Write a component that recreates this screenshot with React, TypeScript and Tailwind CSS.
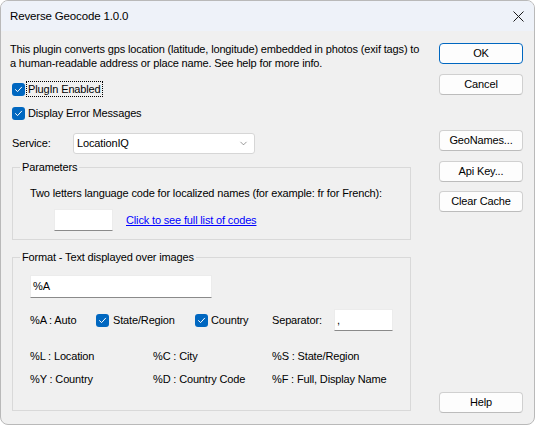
import { ChevronDown } from 'lucide-react'

// ============================================================================
// Small Win32-style controls
// ============================================================================

function CheckBox() {
  return (
    <span className="flex h-[13px] w-[13px] shrink-0 items-center justify-center rounded-[3px] bg-[#0067c0]">
      <svg width="9" height="9" viewBox="0 0 9 9" fill="none">
        <path d="M1.5 4.6 L3.6 6.6 L7.6 2.2" stroke="#ffffff" strokeWidth="1" strokeLinecap="round" strokeLinejoin="round" />
      </svg>
    </span>
  )
}

interface DlgButtonProps {
  label: string
  isDefault?: boolean
  className?: string
}

function DlgButton({ label, isDefault, className }: DlgButtonProps) {
  return (
    <button
      className={
        'flex h-[21px] w-[84px] items-center justify-center rounded-[4px] border bg-[#fdfdfd] text-[11px] text-black ' +
        (isDefault ? 'border-[#0067c0] ' : 'border-[#d0d0d0] border-b-[#bcbcbc] ') +
        (className ?? '')
      }
    >
      {label}
    </button>
  )
}

function TextBox({ value, className }: { value?: string; className?: string }) {
  return (
    <div
      className={
        'flex items-center border border-[#ececec] border-b-[#8a8a8a] bg-white pl-[2px] text-[11px] text-black ' +
        (className ?? '')
      }
    >
      {value}
    </div>
  )
}

// ============================================================================
// App - Reverse Geocode plugin settings dialog
// ============================================================================

export default function App() {
  return (
    <div
      className="h-[425px] w-[535px] bg-white tracking-[-0.15px] text-black"
      style={{ fontFamily: '"Liberation Sans", Arial, sans-serif' }}
    >
      <div className="flex h-full w-full flex-col overflow-hidden rounded-[8px] border border-[#b9b9b9] bg-[#f0f0f0]">
        {/* Title bar */}
        <div className="flex h-[30px] shrink-0 items-center justify-between bg-[#eef2f9] pl-[9px] pr-[10px]">
          <span className="text-[11.5px] leading-[14px]">Reverse Geocode 1.0.0</span>
          <svg width="11" height="11" viewBox="0 0 11 11" fill="none">
            <path d="M0.5 0.5 L10.5 10.5 M10.5 0.5 L0.5 10.5" stroke="#1a1a1a" strokeWidth="1" />
          </svg>
        </div>

        <div className="flex flex-1">
          {/* Left column */}
          <div className="flex flex-1 flex-col pl-[9px]">
            <p className="mt-[11px] text-[11px] leading-[14px]">
              This plugin converts gps location (latitude, longitude) embedded in photos (exif tags) to
              <br />a human-readable address or place name. See help for more info.
            </p>

            <div className="ml-[2px] mt-[11px] flex h-[16px] items-center gap-[2px]">
              <CheckBox />
              <span className="px-[1px] text-[11px] leading-[14px] outline-1 outline-dotted outline-black">
                PlugIn Enabled
              </span>
            </div>

            <div className="ml-[2px] mt-[8px] flex h-[16px] items-center gap-[3px]">
              <CheckBox />
              <span className="text-[11px] leading-[14px]">Display Error Messages</span>
            </div>

            <div className="ml-[2px] mt-[12px] flex items-center">
              <span className="w-[61px] text-[11px]">Service:</span>
              <div className="flex h-[21px] w-[182px] items-center justify-between rounded-[3px] border border-[#d6d6d6] bg-white pl-[3px] pr-[5px] text-[11px]">
                LocationIQ
                <ChevronDown className="h-[11px] w-[11px] text-[#5f5f5f]" strokeWidth={1.4} />
              </div>
            </div>

            <fieldset className="ml-[2px] mt-[6px] w-[399px] border border-[#d9d9d9]">
              <legend className="ml-[7px] px-[2px] text-[11px] leading-[14px]">Parameters</legend>
              <div className="px-[17px] pb-[8px]">
                <p className="mt-[12px] text-[11px] leading-[14px]">
                  Two letters language code for localized names (for example: fr for French):
                </p>
                <div className="mt-[9px] flex items-center">
                  <TextBox className="ml-[24px] h-[22px] w-[59px]" />
                  <a className="ml-[13px] cursor-pointer text-[11px] text-[#0000ff] underline">
                    Click to see full list of codes
                  </a>
                </div>
              </div>
            </fieldset>

            <fieldset className="ml-[2px] mt-[10px] w-[399px] border border-[#d9d9d9]">
              <legend className="ml-[7px] px-[2px] text-[11px] leading-[14px]">
                Format - Text displayed over images
              </legend>
              <div className="px-[17px] pb-[24px]">
                <TextBox value="%A" className="mt-[11px] h-[23px] w-[182px]" />

                <div className="mt-[11px] flex h-[22px] items-center text-[11px]">
                  <span className="w-[66px]">%A : Auto</span>
                  <CheckBox />
                  <span className="ml-[4px] w-[82px]">State/Region</span>
                  <CheckBox />
                  <span className="ml-[3px] w-[61px]">Country</span>
                  <span className="w-[62px]">Separator:</span>
                  <TextBox value="," className="h-[22px] w-[59px]" />
                </div>

                <div className="mt-[18px] grid grid-cols-[123px_119px_1fr] gap-y-[9px] text-[11px] leading-[14px]">
                  <span>%L : Location</span>
                  <span>%C : City</span>
                  <span>%S : State/Region</span>
                  <span>%Y : Country</span>
                  <span>%D : Country Code</span>
                  <span>%F : Full, Display Name</span>
                </div>
              </div>
            </fieldset>
          </div>

          {/* Right column - buttons */}
          <div className="flex flex-col pb-[11px] pr-[11px] pt-[12px]">
            <DlgButton label="OK" isDefault />
            <DlgButton label="Cancel" className="mt-[10px]" />
            <DlgButton label="GeoNames..." className="mt-[35px]" />
            <DlgButton label="Api Key..." className="mt-[10px]" />
            <DlgButton label="Clear Cache" className="mt-[9px]" />
            <DlgButton label="Help" className="mt-auto" />
          </div>
        </div>
      </div>
    </div>
  )
}
